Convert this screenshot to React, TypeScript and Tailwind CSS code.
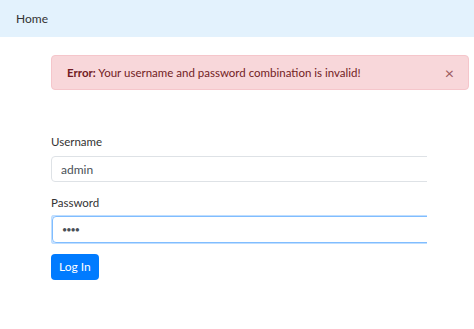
export default function App() {
  return (
    <div className="min-h-[329px] bg-white text-[11.5px] text-[#212529] [font-family:'Lato','Liberation_Sans',sans-serif]">
      <nav className="flex h-[37px] items-center bg-[#e3f2fd] px-4">
        <span className="text-[12px] text-[#333]">Home</span>
      </nav>

      <div className="ml-[51px] mr-[5px] mt-[18px] flex h-[35px] items-center justify-between rounded border border-[#f5c6cb] bg-[#f8d7da] pl-[15px] pr-[14px] text-[#721c24]">
        <p className="text-[11.5px]">
          <strong className="font-bold">Error:</strong> Your username and password combination is invalid!
        </p>
        <button type="button" className="text-[16px] leading-none text-[#9b5a60]">
          ×
        </button>
      </div>

      <form className="ml-[51px] mt-[42px] flex w-[376px] flex-col overflow-hidden">
        <label className="leading-[20px] text-[#333]">Username</label>
        <div className="mt-[4px] overflow-hidden">
          <input
            type="text"
            defaultValue="admin"
            className="h-[26px] w-[420px] rounded border border-[#dee2e6] px-[9px] text-[12px] text-[#495057] outline-none"
          />
        </div>
        <label className="mt-[11px] leading-[20px] text-[#333]">Password</label>
        <div className="mt-[2px] overflow-hidden p-[1px] pr-0">
          <input
            type="password"
            defaultValue="1234"
            className="h-[27px] w-[420px] rounded border border-[#80bdff] px-[9px] text-[9px] tracking-[-1px] text-[#495057] shadow-[0_0_0_2px_rgba(0,123,255,0.25)] outline-none"
          />
        </div>
        <div className="mt-[10px]">
          <button
            type="button"
            className="h-[26px] rounded bg-[#007bff] px-[8px] text-[12px] text-white"
          >
            Log In
          </button>
        </div>
      </form>
    </div>
  );
}
